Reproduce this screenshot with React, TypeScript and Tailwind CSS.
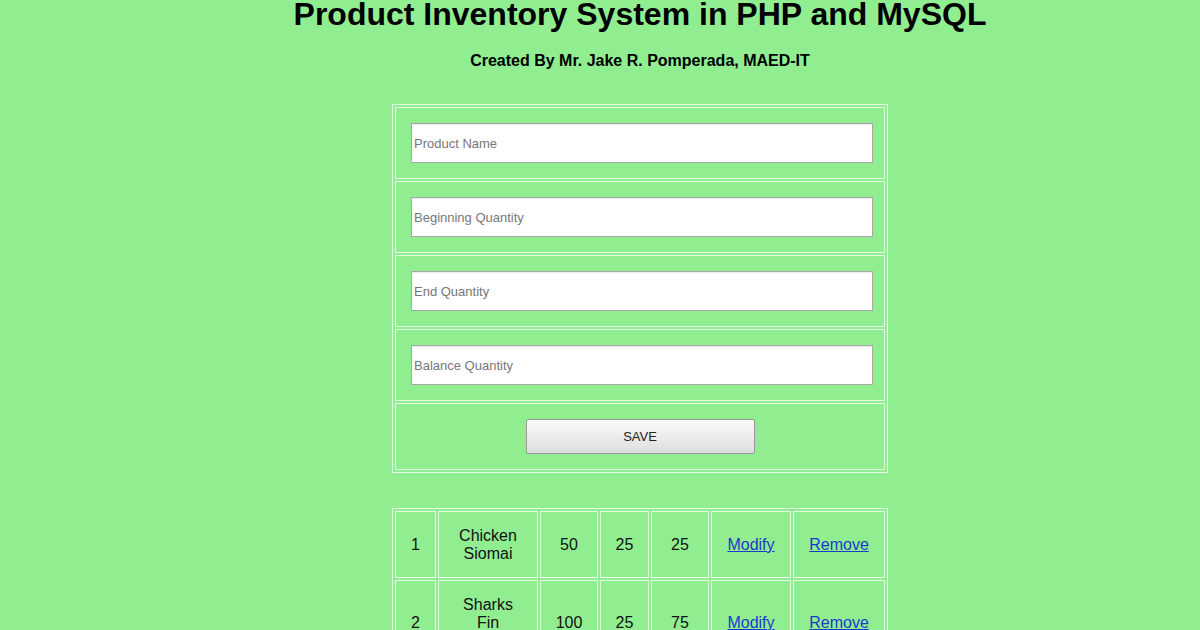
const FIELDS = ["Product Name", "Beginning Quantity", "End Quantity", "Balance Quantity"];

const ROWS = [
  { id: 1, name: "Chicken Siomai", begin: 50, end: 25, balance: 25 },
  { id: 2, name: "Sharks Fin Siomai", begin: 100, end: 25, balance: 75 },
];

const cell = "border border-[#e4fbe4] text-center align-middle";
const dataCell = `${cell} pt-[15px] pb-[14px]`;

export default function App() {
  return (
    <div className="h-[630px] overflow-hidden bg-[#90ee90] pl-[80px] font-['Liberation_Sans',Arial,sans-serif] text-[#111]">
      <h1 className="text-center text-[32px] font-bold leading-[28px] text-black">
        Product Inventory System in PHP and MySQL
      </h1>
      <p className="mt-[24px] text-center text-[16px] font-bold leading-[18px] text-black">
        Created By Mr. Jake R. Pomperada, MAED-IT
      </p>

      <table className="mx-auto mt-[34px] border-separate border-spacing-[2px] border border-[#e4fbe4]">
        <tbody>
          {FIELDS.map((f) => (
            <tr key={f}>
              <td className={`${cell} w-[490px] py-[15px] pl-[15px] pr-[11px] text-left`}>
                <input
                  type="text"
                  placeholder={f}
                  className="block h-[40px] w-[462px] border border-[#a8a8a8] bg-white px-[2px] text-[13px] text-[#333] shadow-[inset_0_1px_1px_rgba(0,0,0,0.08)] outline-none placeholder:text-[#777]"
                />
              </td>
            </tr>
          ))}
          <tr>
            <td className={`${cell} py-[15px]`}>
              <button
                type="button"
                className="mx-auto block h-[35px] w-[229px] rounded-[2px] border border-[#9a9a9a] bg-gradient-to-b from-[#fbfbfb] to-[#dedede] text-[13px] text-[#222]"
              >
                SAVE
              </button>
            </td>
          </tr>
        </tbody>
      </table>

      <table className="mx-auto mt-[35px] table-fixed border-separate border-spacing-[2px] border border-[#e4fbe4] text-[16px] leading-[18px]">
        <tbody>
          {ROWS.map((r) => (
            <tr key={r.id}>
              <td className={`${dataCell} w-[41px]`}>{r.id}</td>
              <td className={`${dataCell} w-[100px] px-[14px]`}>{r.name}</td>
              <td className={`${dataCell} w-[58px]`}>{r.begin}</td>
              <td className={`${dataCell} w-[49px]`}>{r.end}</td>
              <td className={`${dataCell} w-[58px]`}>{r.balance}</td>
              <td className={`${dataCell} w-[80px]`}>
                <a href="#" className="text-[#1a3acc] underline">Modify</a>
              </td>
              <td className={`${dataCell} w-[92px]`}>
                <a href="#" className="text-[#1a3acc] underline">Remove</a>
              </td>
            </tr>
          ))}
        </tbody>
      </table>
    </div>
  );
}
